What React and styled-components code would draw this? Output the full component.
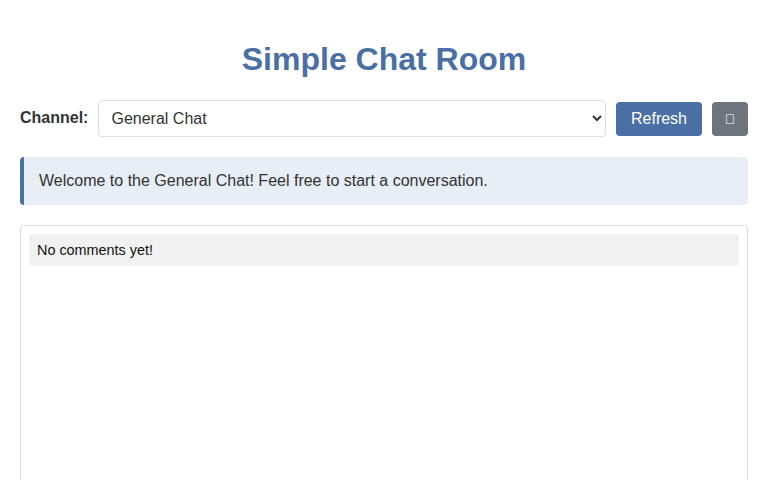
import React from "react";
import styled, { createGlobalStyle } from "styled-components";

const Global = createGlobalStyle`
  html, body { margin: 0; padding: 0; background: #fff; }
  body { font-family: "Liberation Sans", Arial, sans-serif; color: #333; }
  * { box-sizing: border-box; }
`;

const Page = styled.div`
  padding: 20px;
`;

const Title = styled.h1`
  margin: 21px 0 22px;
  text-align: center;
  font-size: 32px;
  font-weight: bold;
  color: #4a6fa5;
  line-height: normal;
`;

const Controls = styled.div`
  display: flex;
  align-items: center;
  gap: 10px;
  margin-bottom: 20px;
`;

const Label = styled.label`
  font-size: 16px;
  font-weight: bold;
  color: #333;
  margin-bottom: 2px;
`;

const Select = styled.select`
  flex: 1;
  height: 37px;
  padding: 0 8px;
  font-family: "Liberation Sans", Arial, sans-serif;
  font-size: 16px;
  color: #333;
  background: #fff;
  border: 1px solid #ddd;
  border-radius: 4px;
`;

const Button = styled.button`
  height: 34px;
  width: ${(p) => (p.$icon ? "36px" : "86px")};
  padding: 0;
  border: none;
  border-radius: 4px;
  font-family: "Liberation Sans", Arial, sans-serif;
  font-size: ${(p) => (p.$icon ? "14px" : "16px")};
  color: #fff;
  background: ${(p) => (p.$variant === "secondary" ? "#6c757d" : "#4a6fa5")};
  cursor: pointer;
`;

const Welcome = styled.div`
  background: #e8eef6;
  border-left: 4px solid #4a6fa5;
  border-radius: 4px;
  padding: 14px 15px;
  font-size: 16px;
  color: #333;
  margin-bottom: 20px;
  line-height: 20px;
`;

const Comments = styled.div`
  border: 1px solid #ddd;
  border-radius: 4px;
  padding: 8px;
  height: 400px;
`;

const Empty = styled.div`
  background: #f1f1f1;
  padding: 8px;
  font-size: 14.4px;
  color: #111;
  line-height: 16px;
  border-radius: 2px;
`;

export default function App() {
  return (
    <>
      <Global />
      <Page>
        <Title>Simple Chat Room</Title>
        <Controls>
          <Label htmlFor="channel">Channel:</Label>
          <Select id="channel" defaultValue="general">
            <option value="general">General Chat</option>
            <option value="random">Random</option>
          </Select>
          <Button>Refresh</Button>
          <Button $variant="secondary" $icon>{"\uf013"}</Button>
        </Controls>
        <Welcome>Welcome to the General Chat! Feel free to start a conversation.</Welcome>
        <Comments>
          <Empty>No comments yet!</Empty>
        </Comments>
      </Page>
    </>
  );
}
